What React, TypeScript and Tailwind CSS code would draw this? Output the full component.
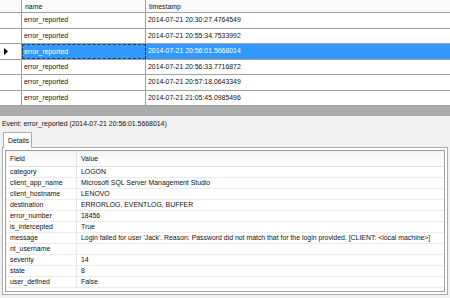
const events = [
  { name: "error_reported", timestamp: "2014-07-21 20:30:27.4764549" },
  { name: "error_reported", timestamp: "2014-07-21 20:55:34.7533992" },
  { name: "error_reported", timestamp: "2014-07-21 20:56:01.5668014" },
  { name: "error_reported", timestamp: "2014-07-21 20:56:33.7716872" },
  { name: "error_reported", timestamp: "2014-07-21 20:57:18.0643349" },
  { name: "error_reported", timestamp: "2014-07-21 21:05:45.0985496" },
];

const fields = [
  ["category", "LOGON"],
  ["client_app_name", "Microsoft SQL Server Management Studio"],
  ["client_hostname", "LENOVO"],
  ["destination", "ERRORLOG, EVENTLOG, BUFFER"],
  ["error_number", "18456"],
  ["is_intercepted", "True"],
  [
    "message",
    "Login failed for user 'Jack'. Reason: Password did not match that for the login provided. [CLIENT: <local machine>]",
  ],
  ["nt_username", ""],
  ["severity", "14"],
  ["state", "8"],
  ["user_defined", "False"],
];

const selected = 2;

function EventGrid() {
  return (
    <div className="h-[106px] bg-white">
      {/* header */}
      <div className="flex h-[13px] border-b border-[#a0a0a0] bg-[#fafafa]">
        <div className="w-[22px] border-r border-[#a0a0a0]" />
        <div className="w-[124px] border-r border-[#a0a0a0] pl-[3px] leading-[13px]">name</div>
        <div className="flex-1 pl-[3px] leading-[13px]">timestamp</div>
      </div>
      {events.map((ev, i) => {
        const sel = i === selected;
        return (
          <div key={i} className="flex h-[15.5px] border-b border-[#a0a0a0]">
            <div className="relative w-[22px] border-r border-[#a0a0a0]">
              {sel && (
                <svg className="absolute left-[4px] top-[4px]" width="5" height="7" viewBox="0 0 5 7">
                  <path d="M0 0 L4 3.5 L0 7 Z" fill="#000" />
                </svg>
              )}
            </div>
            <div
              className={
                sel
                  ? "w-[124px] border border-dashed border-[#1a3d66] bg-[#3399ff] pl-[1px] leading-[13px] text-white"
                  : "w-[124px] border-r border-[#a0a0a0] pl-[2px] leading-[14.5px]"
              }
            >
              {ev.name}
            </div>
            <div
              className={
                sel
                  ? "flex-1 bg-[#3399ff] pl-[2px] leading-[14.5px] text-white"
                  : "flex-1 pl-[2px] leading-[14.5px]"
              }
            >
              {ev.timestamp}
            </div>
          </div>
        );
      })}
    </div>
  );
}

function DetailsGrid() {
  return (
    <div className="mx-[2px] h-[148px] border border-[#adadad] bg-white p-[2px]">
      <div className="h-full border border-[#a0a0a0] bg-white">
        <div className="flex h-[16px] border-b border-[#e3e3e3] bg-gradient-to-b from-[#f5f5f5] to-[#ffffff]">
          <div className="w-[71px] border-r border-[#e0e0e0] pl-[4px] leading-[16px]">Field</div>
          <div className="flex-1 pl-[4px] leading-[16px]">Value</div>
        </div>
        {fields.map(([k, v]) => (
          <div key={k} className="flex h-[11px] border-b border-[#ececec]">
            <div className="w-[71px] border-r border-[#e8e8e8] pl-[4px] leading-[10px]">{k}</div>
            <div className="flex-1 whitespace-nowrap pl-[4px] leading-[10px]">{v}</div>
          </div>
        ))}
      </div>
    </div>
  );
}

export default function App() {
  return (
    <div
      className="h-[298px] w-[450px] overflow-hidden bg-[#f0f0f0] text-[6.9px] text-[#111]"
      style={{ fontFamily: '"Liberation Sans", Arial, sans-serif' }}
    >
      <EventGrid />
      <div className="h-[10px] bg-[#ababab]" />
      <div className="h-[16px] pl-[2px] leading-[16px]">
        Event: error_reported (2014-07-21 20:56:01.5668014)
      </div>
      <div className="flex h-[15px] pl-[3px]">
        <div className="relative z-10 -mb-px w-[29px] border border-b-0 border-[#adadad] bg-white pl-[4px] leading-[15px]">
          Details
        </div>
      </div>
      <DetailsGrid />
    </div>
  );
}
